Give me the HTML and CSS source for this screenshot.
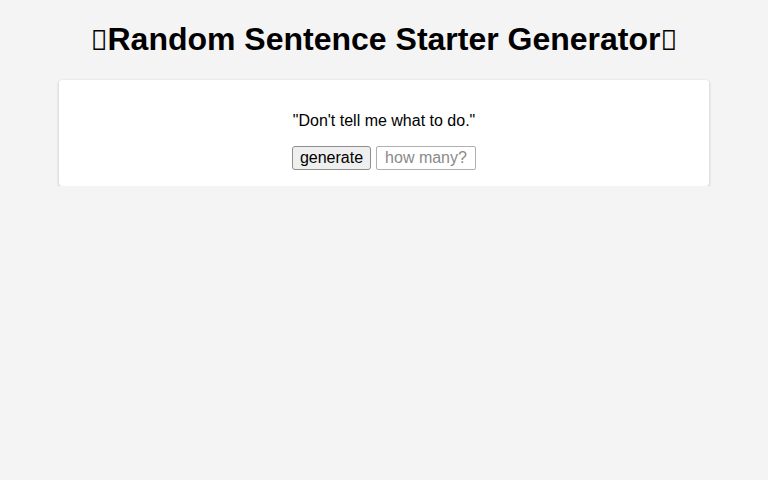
FILE: index.html
```html
<!DOCTYPE html>
<html>
<head>
<meta charset="utf-8">
<link rel="stylesheet" href="styles.css">
</head>
<body>
<h1 class="title"><span class="tofu">&#xE000;</span>Random Sentence Starter Generator<span class="tofu">&#xE000;</span></h1>
<main class="card">
  <p class="sentence">"Don't tell me what to do."</p>
  <div class="controls">
    <button class="btn">generate</button>
    <input class="count" type="number" placeholder="how many?">
  </div>
</main>
</body>
</html>
```
FILE: styles.css
```css
html, body {
  margin: 0;
  background: #f4f4f4;
  font-family: "Liberation Sans", Arial, sans-serif;
  color: #000;
}
.title {
  font-size: 32px;
  font-weight: bold;
  text-align: center;
  margin: 21px 0 22px;
  line-height: 37px;
}
.tofu {
  font-family: "Noto Sans", sans-serif;
  font-weight: normal;
  font-size: 28px;
  line-height: 0;
}
.card {
  display: block;
  width: 650px;
  margin: 0 auto;
  background: #fff;
  padding: 16px 0;
  box-shadow: 0 1px 3px rgba(0,0,0,0.25);
  border-radius: 3px;
  text-align: center;
}
.sentence {
  font-size: 16px;
  margin: 16px 0;
  line-height: 18px;
}
.controls {
  display: flex;
  justify-content: center;
  gap: 5px;
  height: 24px;
}
.btn {
  font-family: "Liberation Sans", Arial, sans-serif;
  font-size: 16px;
  padding: 1px 7px;
  background: #efefef;
  border: 1px solid #8f8f8f;
  border-radius: 3px;
  height: 24px;
  box-sizing: border-box;
  color: #000;
}
.count {
  font-family: "Liberation Sans", Arial, sans-serif;
  font-size: 16px;
  width: 100px;
  height: 24px;
  box-sizing: border-box;
  padding: 1px 8px;
  border: 1px solid #b0b0b0;
  border-radius: 2px;
}
.count::placeholder { color: #8a8a8a; }
.count::-webkit-inner-spin-button { display: none; }
```
